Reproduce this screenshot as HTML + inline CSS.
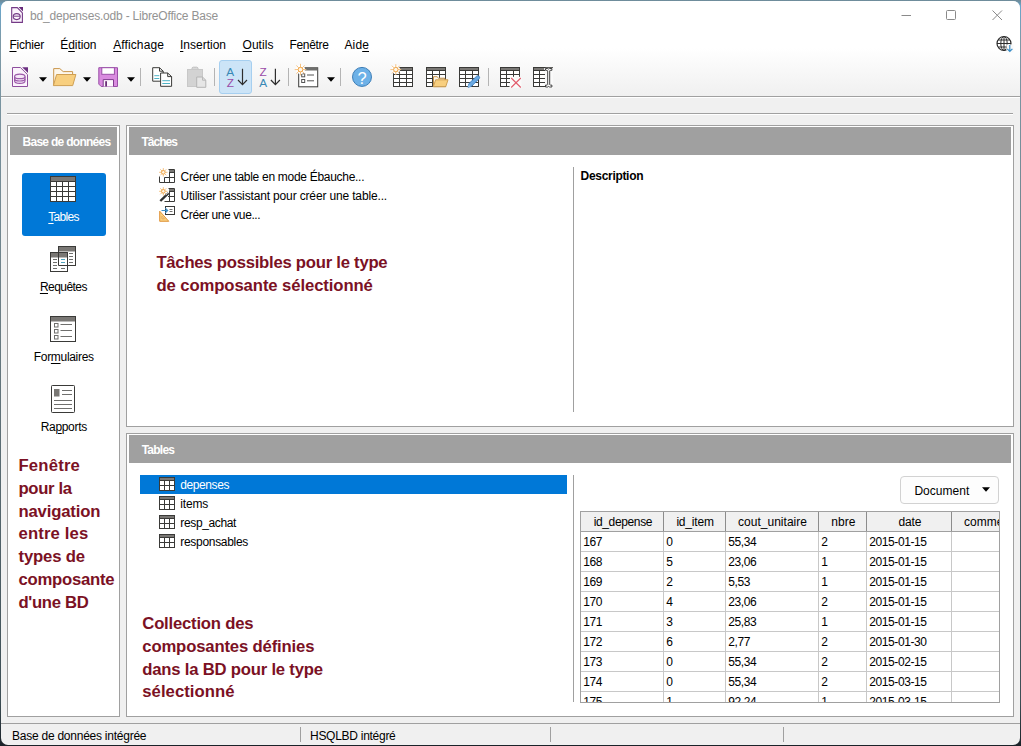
<!DOCTYPE html>
<html lang="fr">
<head>
<meta charset="utf-8">
<title>bd_depenses.odb - LibreOffice Base</title>
<style>
html,body{margin:0;padding:0;}
body{width:1021px;height:746px;overflow:hidden;position:relative;
  background:linear-gradient(180deg,#6f8a97 0px,#6aa6cc 6px,#7d9aa8 40px,#6d7f86 300px,#3d4e55 700px,#1a2228 746px);
  font-family:"Liberation Sans",sans-serif;font-size:12px;color:#000;}
#win{position:absolute;left:1px;top:1px;width:1018.600px;height:744px;border-radius:7px;background:#f0f0f0;overflow:hidden;}
#abs{position:absolute;left:-1px;top:-1px;width:1021px;height:746px;}
#abs div,#abs span,#abs svg{position:absolute;}
.t{white-space:nowrap;line-height:1;height:1em;}
.t u{text-decoration:underline;text-underline-offset:2px;text-decoration-thickness:1px;}
#topbg{left:0;top:0;width:1021px;height:96px;background:linear-gradient(180deg,#fff 0px,#fff 48px,#f0f0f0 96px);}
.az{font-size:11.800px;}
.hl{height:1px;background:#a0a0a0;}
.hw{height:1px;background:#fff;}
.panel{background:#fff;border:1px solid #a0a0a0;box-sizing:border-box;}
.phead{background:#a0a0a0;}
.sep{width:1px;background:#b4b4b4;}
.vsep{width:1px;background:#a0a0a0;}
.sel{background:#0078d7;}
.arr{width:8px;height:4.500px;background:#000;clip-path:polygon(0 0,100% 0,50% 100%);}
#grid{overflow:hidden;background:#fff;}
#grid .hbg{background:#f0f0f0;}
#grid .rl{height:1px;background:#c8c8c8;}
#grid .cl{width:1px;background:#c8c8c8;}
#grid .hcl{width:1px;background:#8c8c8c;}
#grid .hbl{height:1px;background:#a0a0a0;}
#grid .gb{border:1px solid #a0a0a0;box-sizing:border-box;}
</style>
</head>
<body>
<div id="win"><div id="abs">
<div id="topbg"></div>
<div class="hl" style="left:1px;top:96px;width:1019px"></div>
<div class="hw" style="left:1px;top:97px;width:1019px"></div>
<div class="hl" style="left:7px;top:113px;width:1006px"></div>
<div class="hw" style="left:7px;top:114px;width:1006px"></div>

<!-- left panel -->
<div class="panel" style="left:7px;top:125px;width:113px;height:592px"></div>
<div class="phead" style="left:10px;top:127px;width:107px;height:28px"></div>
<div class="sel" style="left:22px;top:173px;width:84px;height:63px;border-radius:3px"></div>

<!-- tasks panel -->
<div class="panel" style="left:126px;top:125px;width:888px;height:302px"></div>
<div class="phead" style="left:129px;top:127px;width:882px;height:28px"></div>
<div class="vsep" style="left:573px;top:167px;height:245px"></div>

<!-- tables panel -->
<div class="panel" style="left:126px;top:433px;width:888px;height:284px"></div>
<div class="phead" style="left:129px;top:435px;width:882px;height:28px"></div>
<div class="sel" style="left:140px;top:475px;width:427px;height:19px"></div>
<div class="vsep" style="left:573px;top:475px;height:227px"></div>

<!-- document button -->
<div style="left:900px;top:476px;width:99px;height:28px;border:1px solid #d2d2d2;border-radius:4px;background:#fdfdfd;box-sizing:border-box"></div>
<div class="arr" style="left:982px;top:487.200px"></div>

<div id="grid" style="left:580px;top:511px;width:420px;height:192px">
<div class="hbg" style="left:0;top:0;width:420px;height:20px"></div>
<div class="rl" style="left:0;top:40px;width:420px"></div>
<div class="rl" style="left:0;top:60px;width:420px"></div>
<div class="rl" style="left:0;top:80px;width:420px"></div>
<div class="rl" style="left:0;top:100px;width:420px"></div>
<div class="rl" style="left:0;top:120px;width:420px"></div>
<div class="rl" style="left:0;top:140px;width:420px"></div>
<div class="rl" style="left:0;top:160px;width:420px"></div>
<div class="rl" style="left:0;top:180px;width:420px"></div>
<div class="rl" style="left:0;top:200px;width:420px"></div>
<div class="cl" style="left:83px;top:21px;height:171px"></div>
<div class="hcl" style="left:83px;top:1px;height:19px"></div>
<div class="cl" style="left:145px;top:21px;height:171px"></div>
<div class="hcl" style="left:145px;top:1px;height:19px"></div>
<div class="cl" style="left:238px;top:21px;height:171px"></div>
<div class="hcl" style="left:238px;top:1px;height:19px"></div>
<div class="cl" style="left:286px;top:21px;height:171px"></div>
<div class="hcl" style="left:286px;top:1px;height:19px"></div>
<div class="cl" style="left:371px;top:21px;height:171px"></div>
<div class="hcl" style="left:371px;top:1px;height:19px"></div>
<div class="hbl" style="left:0;top:20px;width:420px"></div>
<span class="t" id="t39" style="left:13.7px;top:4.54px;letter-spacing:-0.366px;">id_depense</span>
<span class="t" id="t40" style="left:96.4px;top:4.54px;letter-spacing:-0.184px;">id_item</span>
<span class="t" id="t41" style="left:158.0px;top:4.54px;letter-spacing:0.022px;">cout_unitaire</span>
<span class="t" id="t42" style="left:251.3px;top:4.54px;letter-spacing:0.017px;">nbre</span>
<span class="t" id="t43" style="left:318.6px;top:4.54px;letter-spacing:-0.215px;">date</span>
<span class="t" id="t44" style="left:384.0px;top:4.54px;">comme</span>
<span class="t" id="t45" style="left:3.3px;top:24.64px;letter-spacing:-0.420px;">167</span>
<span class="t" id="t46" style="left:86.3px;top:24.64px;letter-spacing:-0.420px;">0</span>
<span class="t" id="t47" style="left:148.3px;top:24.64px;letter-spacing:-0.420px;">55,34</span>
<span class="t" id="t48" style="left:241.3px;top:24.64px;letter-spacing:-0.420px;">2</span>
<span class="t" id="t49" style="left:289.3px;top:24.64px;letter-spacing:-0.420px;">2015-01-15</span>
<span class="t" id="t50" style="left:3.3px;top:44.64px;letter-spacing:-0.420px;">168</span>
<span class="t" id="t51" style="left:86.3px;top:44.64px;letter-spacing:-0.420px;">5</span>
<span class="t" id="t52" style="left:148.3px;top:44.64px;letter-spacing:-0.420px;">23,06</span>
<span class="t" id="t53" style="left:241.3px;top:44.64px;letter-spacing:-0.420px;">1</span>
<span class="t" id="t54" style="left:289.3px;top:44.64px;letter-spacing:-0.420px;">2015-01-15</span>
<span class="t" id="t55" style="left:3.3px;top:64.64px;letter-spacing:-0.420px;">169</span>
<span class="t" id="t56" style="left:86.3px;top:64.64px;letter-spacing:-0.420px;">2</span>
<span class="t" id="t57" style="left:148.3px;top:64.64px;letter-spacing:-0.420px;">5,53</span>
<span class="t" id="t58" style="left:241.3px;top:64.64px;letter-spacing:-0.420px;">1</span>
<span class="t" id="t59" style="left:289.3px;top:64.64px;letter-spacing:-0.420px;">2015-01-15</span>
<span class="t" id="t60" style="left:3.3px;top:84.64px;letter-spacing:-0.420px;">170</span>
<span class="t" id="t61" style="left:86.3px;top:84.64px;letter-spacing:-0.420px;">4</span>
<span class="t" id="t62" style="left:148.3px;top:84.64px;letter-spacing:-0.420px;">23,06</span>
<span class="t" id="t63" style="left:241.3px;top:84.64px;letter-spacing:-0.420px;">2</span>
<span class="t" id="t64" style="left:289.3px;top:84.64px;letter-spacing:-0.420px;">2015-01-15</span>
<span class="t" id="t65" style="left:3.3px;top:104.64px;letter-spacing:-0.420px;">171</span>
<span class="t" id="t66" style="left:86.3px;top:104.64px;letter-spacing:-0.420px;">3</span>
<span class="t" id="t67" style="left:148.3px;top:104.64px;letter-spacing:-0.420px;">25,83</span>
<span class="t" id="t68" style="left:241.3px;top:104.64px;letter-spacing:-0.420px;">1</span>
<span class="t" id="t69" style="left:289.3px;top:104.64px;letter-spacing:-0.420px;">2015-01-15</span>
<span class="t" id="t70" style="left:3.3px;top:124.64px;letter-spacing:-0.420px;">172</span>
<span class="t" id="t71" style="left:86.3px;top:124.64px;letter-spacing:-0.420px;">6</span>
<span class="t" id="t72" style="left:148.3px;top:124.64px;letter-spacing:-0.420px;">2,77</span>
<span class="t" id="t73" style="left:241.3px;top:124.64px;letter-spacing:-0.420px;">2</span>
<span class="t" id="t74" style="left:289.3px;top:124.64px;letter-spacing:-0.420px;">2015-01-30</span>
<span class="t" id="t75" style="left:3.3px;top:144.64px;letter-spacing:-0.420px;">173</span>
<span class="t" id="t76" style="left:86.3px;top:144.64px;letter-spacing:-0.420px;">0</span>
<span class="t" id="t77" style="left:148.3px;top:144.64px;letter-spacing:-0.420px;">55,34</span>
<span class="t" id="t78" style="left:241.3px;top:144.64px;letter-spacing:-0.420px;">2</span>
<span class="t" id="t79" style="left:289.3px;top:144.64px;letter-spacing:-0.420px;">2015-02-15</span>
<span class="t" id="t80" style="left:3.3px;top:164.64px;letter-spacing:-0.420px;">174</span>
<span class="t" id="t81" style="left:86.3px;top:164.64px;letter-spacing:-0.420px;">0</span>
<span class="t" id="t82" style="left:148.3px;top:164.64px;letter-spacing:-0.420px;">55,34</span>
<span class="t" id="t83" style="left:241.3px;top:164.64px;letter-spacing:-0.420px;">2</span>
<span class="t" id="t84" style="left:289.3px;top:164.64px;letter-spacing:-0.420px;">2015-03-15</span>
<span class="t" id="t85" style="left:3.3px;top:184.64px;letter-spacing:-0.420px;">175</span>
<span class="t" id="t86" style="left:86.3px;top:184.64px;letter-spacing:-0.420px;">1</span>
<span class="t" id="t87" style="left:148.3px;top:184.64px;letter-spacing:-0.420px;">92,24</span>
<span class="t" id="t88" style="left:241.3px;top:184.64px;letter-spacing:-0.420px;">1</span>
<span class="t" id="t89" style="left:289.3px;top:184.64px;letter-spacing:-0.420px;">2015-03-15</span>
<div class="gb" style="left:0;top:0;width:420px;height:192px"></div>
</div>

<!-- status bar -->
<div class="hl" style="left:1px;top:723px;width:1019px"></div>
<div class="vsep" style="left:300px;top:727px;height:15px"></div>
<div class="vsep" style="left:550px;top:727px;height:15px"></div>
<div class="vsep" style="left:783px;top:727px;height:15px"></div>

<!-- ===== title bar ===== -->
<svg style="left:11px;top:7px" width="12" height="16" viewBox="0 0 12 16">
  <path d="M0.700 0.600H6.300L11.400 5.900V15.400H0.700Z" fill="#fbf3fc" stroke="#743a86" stroke-width="1.100"/>
  <path d="M7.600 0.100H12V4.500Z" fill="#67297a"/>
  <ellipse cx="5.700" cy="9.600" rx="3.500" ry="3" fill="#fdf7fe" stroke="#743a86" stroke-width="1.100"/>
  <path d="M2.400 9.200H9" stroke="#743a86" stroke-width="1" fill="none"/>
</svg>
<svg style="left:896px;top:5px" width="112" height="20" viewBox="0 0 112 20" fill="none" stroke="#8a8a8a" stroke-width="1">
  <path d="M5.5 10.5H15"/>
  <rect x="50.5" y="5.5" width="9" height="9" rx="1"/>
  <path d="M96.5 5.5L106 15M106 5.5L96.5 15"/>
</svg>
<!-- globe -->
<svg style="left:996px;top:35px" width="18" height="18" viewBox="0 0 18 18" fill="none">
  <circle cx="8" cy="8.5" r="7" stroke="#2e2e2e" stroke-width="1.2"/>
  <ellipse cx="8" cy="8.5" rx="3.2" ry="7" stroke="#2e2e2e" stroke-width="1"/>
  <path d="M8 1.5V15.5M1 8.5H15M2.2 5H13.8M2.2 12H13.8" stroke="#2e2e2e" stroke-width="1"/>
  <rect x="10.5" y="9.5" width="7" height="8" fill="#fafafa" stroke="none"/>
  <path d="M13.8 10V16.2M11.2 13.8L13.8 16.4L16.4 13.8" stroke="#3a8ec8" stroke-width="1.2"/>
</svg>

<!-- ===== toolbar ===== -->
<!-- new database -->
<svg style="left:8px;top:65px" width="24" height="24" viewBox="0 0 24 24">
  <path d="M4.5 2.5H12.4L19.5 9.6V21.5H4.5Z" fill="#fbf3fc" stroke="#8e4e9e" stroke-width="1"/>
  <path d="M14.2 2.2H20V8Z" fill="#6c2f82"/>
  <g fill="#f6e9f8" stroke="#9c5aaa" stroke-width="1.200">
    <path d="M6.6 11.5V16c0 1.5 2.4 2.4 5.2 2.4s5.2-0.900 5.200-2.400V11.500"/>
    <path d="M6.600 13.700c0 1.400 2.400 2.300 5.200 2.300s5.200-0.900 5.200-2.300" fill="none"/>
    <ellipse cx="11.800" cy="11.400" rx="5.200" ry="2.300"/>
  </g>
</svg>
<div class="arr" style="left:39px;top:77.200px"></div>
<!-- open folder -->
<svg style="left:52px;top:65px" width="26" height="24" viewBox="0 0 26 24">
  <path d="M1.700 20.400V3.600H7.800L11.200 6.600H20.600V9.500" fill="#fdf7ec" stroke="#c9964c" stroke-width="1"/>
  <path d="M4.600 9.500H23.900L20.700 20.600H1.400Z" fill="#f8cf7f" stroke="#cf9f52" stroke-width="1" stroke-linejoin="round"/>
</svg>
<div class="arr" style="left:83px;top:77.200px"></div>
<!-- save -->
<svg style="left:96px;top:65px" width="24" height="24" viewBox="0 0 24 24">
  <path d="M2.800 2.700H21.500V21.500H5.200L2.800 19.100Z" fill="#d98bdf" stroke="#9a4fa8" stroke-width="1" stroke-linejoin="round"/>
  <rect x="5.800" y="2.700" width="12.600" height="6.600" fill="#fff" stroke="#9a4fa8" stroke-width="1"/>
  <path d="M7.200 21.500V14.600H17.500V21.500" fill="#fdf6fd" stroke="#7f3a8e" stroke-width="1"/>
  <rect x="9.200" y="16.200" width="1.800" height="5.300" fill="#6a2d78"/>
</svg>
<div class="arr" style="left:127px;top:77.200px"></div>
<div class="sep" style="left:140px;top:68px;height:18px"></div>
<!-- copy -->
<svg style="left:150px;top:65px" width="24" height="24" viewBox="0 0 24 24" fill="#fff" stroke="#3a3a38" stroke-width="1" stroke-linejoin="round">
  <path d="M2.700 2.700H9.500L13.200 6.200V16.200H2.700Z"/>
  <path d="M9.500 2.700V6.200H13.200" fill="none"/>
  <path d="M4.300 10.700H9.300M4.300 13.500H9.300" stroke="#4fb3c6"/>
  <path d="M10.600 8H17.700L21.600 11.600V21.300H10.600Z"/>
  <path d="M17.700 8V11.600H21.600" fill="none"/>
  <path d="M12.300 15.700H20M12.300 18.500H20" stroke="#4fb3c6"/>
</svg>
<!-- paste (disabled) -->
<svg style="left:185px;top:65px" width="24" height="24" viewBox="0 0 24 24">
  <path d="M7 4.400V3.400C7 2.700 7.600 2.200 8.300 2.200H11.700C12.400 2.200 13 2.700 13 3.400V4.400Z" fill="#dcdcdc" stroke="#bdbdbd" stroke-width="1"/>
  <rect x="2.500" y="4.500" width="15" height="17" fill="#d3d3d3" stroke="#c8c8c8" stroke-width="1"/>
  <path d="M11.700 12H17.500L20.800 15.200V22.300H11.700Z" fill="#e6e6e6" stroke="#b4b4b4" stroke-width="1"/>
  <path d="M17.500 12V15.200H20.800" fill="none" stroke="#b9b9b9" stroke-width="1"/>
</svg>
<div class="sep" style="left:214px;top:68px;height:18px"></div>
<!-- sort asc (active) -->
<div style="left:219px;top:60px;width:33px;height:34px;background:#cce4f7;border:1px solid #a6cff0;border-radius:3px;box-sizing:border-box"></div>
<span class="t az" style="left:226.2px;top:67.000px;color:#3889b5">A</span>
<span class="t az" style="left:226.800px;top:78.000px;color:#9a4ba8">Z</span>
<svg style="left:236px;top:66px" width="14" height="22" viewBox="0 0 14 22" fill="none" stroke="#2e2e2e" stroke-width="1.200">
  <path d="M6.500 2.700V18.400M2 14L6.500 18.600L11 14"/>
</svg>
<!-- sort desc -->
<span class="t az" style="left:259.600px;top:67.000px;color:#9a4ba8">Z</span>
<span class="t az" style="left:259.300px;top:78.000px;color:#3889b5">A</span>
<svg style="left:269px;top:66px" width="14" height="22" viewBox="0 0 14 22" fill="none" stroke="#2e2e2e" stroke-width="1.200">
  <path d="M6.400 2.700V18.400M1.900 14L6.400 18.600L10.900 14"/>
</svg>
<div class="sep" style="left:288px;top:68px;height:18px"></div>
<!-- new form -->
<svg style="left:294px;top:63px" width="26" height="26" viewBox="0 0 26 26">
  <rect x="4.700" y="4.800" width="19" height="19" fill="#fff" stroke="#3a3a38" stroke-width="1"/>
  <rect x="5" y="5" width="18.500" height="2.500" fill="#6f6f6d"/>
  <g fill="none" stroke="#555" stroke-width="1">
    <rect x="7.700" y="10.800" width="3" height="3"/>
    <rect x="7.700" y="16.500" width="3" height="3"/>
    <path d="M13 12H20M13 17.800H20"/>
  </g>
  <g stroke="#f0a64a" stroke-width="1" fill="none">
    <circle cx="6.500" cy="6.600" r="4.600" fill="#fff" stroke="none"/>
    <path d="M6.500 0.800V12.400M0.700 6.600H12.300M2.400 2.500L10.600 10.700M10.600 2.500L2.400 10.700" stroke="#f5c283"/>
    <circle cx="6.500" cy="6.600" r="2.300" fill="#fff7e8" stroke="#f0a64a"/>
  </g>
</svg>
<div class="arr" style="left:327px;top:77.200px"></div>
<div class="sep" style="left:340px;top:68px;height:18px"></div>
<!-- help -->
<svg style="left:351px;top:66px" width="22" height="22" viewBox="0 0 22 22">
  <circle cx="11" cy="10.900" r="9.500" fill="#6db1e7" stroke="#3c7db6" stroke-width="1"/>
  <text x="11" y="17.600" text-anchor="middle" font-family="Liberation Sans, sans-serif" font-size="16.500" font-weight="400" fill="#fff">?</text>
</svg>

<svg style="left:389px;top:63px" width="26" height="26" viewBox="0 0 26 26"><g transform="translate(2,2)"><rect x="2.500" y="2.500" width="19" height="19" fill="#fff" stroke="#3a3a38"/><rect x="3" y="3" width="18" height="2.500" fill="#797774" stroke="none"/><path d="M3 5.500H21M3 9.500H21M3 13.500H21M3 17.500H21M8.500 6V21M15.500 6V21" stroke="#3a3a38" fill="none"/></g><g fill="none" stroke-width="1"><circle cx="6.8" cy="6.6" r="4.3" fill="#fff" stroke="none"/><path d="M6.8 1.2V12M1.4 6.6H12.2M2.91 2.71L10.69 10.49M10.69 2.71L2.91 10.49" stroke="#f5c283"/><circle cx="6.8" cy="6.6" r="2.2" fill="#fff7e8" stroke="#f0a64a"/></g></svg>
<svg style="left:424px;top:65px" width="26" height="24" viewBox="0 0 26 24"><rect x="2.500" y="2.500" width="19" height="19" fill="#fff" stroke="#3a3a38"/><rect x="3" y="3" width="18" height="2.500" fill="#797774" stroke="none"/><path d="M3 5.500H21M3 9.500H21M3 13.500H21M3 17.500H21M8.500 6V21M15.500 6V21" stroke="#3a3a38" fill="none"/><path d="M9.500 21.800V11.700H13L14.600 13.200H20.700V15" fill="#fdf7ec" stroke="#c9964c"/><path d="M11.600 14.800H24L21.700 21.800H9.300Z" fill="#f8cf7f" stroke="#cf9f52" stroke-linejoin="round"/></svg>
<svg style="left:457px;top:65px" width="26" height="24" viewBox="0 0 26 24"><rect x="2.500" y="2.500" width="19" height="19" fill="#fff" stroke="#3a3a38"/><rect x="3" y="3" width="18" height="2.500" fill="#797774" stroke="none"/><path d="M3 5.500H21M3 9.500H21M3 13.500H21M3 17.500H21M8.500 6V21M15.500 6V21" stroke="#3a3a38" fill="none"/><path d="M11 22.300L11.900 18.600L19.600 11.200C20.300 10.500 21.300 10.500 22 11.200C22.800 12 22.800 13 22.100 13.700L14.500 21.300Z" fill="#6aa9e2" stroke="#3f7fbf" stroke-width="0.900" stroke-linejoin="round"/><path d="M11 22.300L11.800 19.300L13.900 21.400Z" fill="#8ec0ea" stroke="none"/></svg>
<div class="sep" style="left:488px;top:68px;height:18px"></div>
<svg style="left:498px;top:65px" width="26" height="24" viewBox="0 0 26 24"><rect x="2.500" y="2.500" width="19" height="19" fill="#fff" stroke="#3a3a38"/><rect x="3" y="3" width="18" height="2.500" fill="#797774" stroke="none"/><path d="M3 5.500H21M3 9.500H21M3 13.500H21M3 17.500H21M8.500 6V21M15.500 6V21" stroke="#3a3a38" fill="none"/><rect x="11.500" y="11.800" width="12" height="11" fill="#fafafa" stroke="none"/><path d="M3 13.500H12M3 17.500H12M8.500 12V21" stroke="#3a3a38" fill="none"/><path d="M13.200 13L22.800 22.500M22.800 13L13.200 22.500" stroke="#e25c6c" stroke-width="1.100" fill="none"/></svg>
<svg style="left:531px;top:65px" width="26" height="24" viewBox="0 0 26 24"><rect x="2.500" y="2.500" width="19" height="19" fill="#fff" stroke="#3a3a38"/><rect x="3" y="3" width="18" height="2.500" fill="#797774" stroke="none"/><path d="M3 5.500H21M3 9.500H21M3 13.500H21M3 17.500H21M8.500 6V21M15.500 6V21" stroke="#3a3a38" fill="none"/><rect x="13.200" y="2.800" width="9" height="20" fill="#fafafa" stroke="none"/><path d="M3 5.500H14M3 9.500H14M3 13.500H14M3 17.500H14M3 21.500H14M3 2.500H14.500" stroke="#3a3a38" fill="none"/><path d="M14.500 3.500H16.800L17.700 4.100L18.600 3.500H20.900V5.300H19.200L18.700 5.800V19.600L19.200 20.100H20.900V22H18.600L17.700 21.400L16.800 22H14.500V20.100H16.200L16.700 19.600V5.800L16.200 5.300H14.500Z" fill="#fff" stroke="#2e2e2e" stroke-width="0.900" stroke-linejoin="round"/></svg>
<svg style="left:50px;top:176px" width="26" height="26" viewBox="0 0 26 26"><rect x="0.500" y="0.500" width="25" height="25" fill="#fff" stroke="#3a3a38"/><rect x="1" y="1" width="24" height="4" fill="#797774"/><path d="M1 5.500H25M1 10.500H25M1 15.500H25M1 20.500H25M6.500 6V25M12.500 6V25M18.500 6V25" stroke="#3a3a38" fill="none"/></svg>
<svg style="left:50px;top:246px" width="26" height="26" viewBox="0 0 26 26"><rect x="8.500" y="0.500" width="17" height="19" fill="#fff" stroke="#3a3a38"/><rect x="9" y="1" width="16" height="4.500" fill="#797774"/><path d="M19 7.500H23M19 10.500H23M19 13.500H23M19 16.500H23" stroke="#6f6f6d" fill="none"/><rect x="0.500" y="6.500" width="17" height="19" fill="#fff" stroke="#3a3a38"/><rect x="1" y="7" width="16" height="4.500" fill="#797774"/><path d="M3 13.500H7M3 16.500H7M3 19.500H7M3 22.500H7M11 22.500H15" stroke="#6f6f6d" fill="none"/><path d="M8.500 6.500V19.500H17.500" stroke="#3a3a38" fill="none"/><path d="M8.500 0.500V7M17.500 6.500V12" stroke="#3a3a38" fill="none"/><path d="M11 13.500H15M11 16.500H15" stroke="#4fa3bd" fill="none"/></svg>
<svg style="left:50px;top:316px" width="26" height="26" viewBox="0 0 26 26"><rect x="0.500" y="0.500" width="25" height="25" fill="#fff" stroke="#3a3a38"/><rect x="1" y="1" width="24" height="4.500" fill="#797774"/><g fill="none" stroke="#6f6f6d"><rect x="4.500" y="7.500" width="3.500" height="3.500"/><rect x="4.500" y="13.500" width="3.500" height="3.500"/><rect x="4.500" y="19.500" width="3.500" height="3.500"/><path d="M10.500 8.500H22M10.500 14.500H22M10.500 20.500H22"/></g></svg>
<svg style="left:51px;top:385px" width="24" height="28" viewBox="0 0 24 28"><rect x="0.500" y="0.500" width="23" height="27" rx="0.800" fill="#fff" stroke="#3a3a38"/><rect x="3" y="4" width="5.500" height="7.500" fill="#797774"/><path d="M11 5.500H21M11 9.500H21M3 15.500H21M3 19.500H21M3 23.500H21" stroke="#6f6f6d" fill="none"/></svg>
<svg style="left:159px;top:477px" width="16" height="14" viewBox="0 0 16 14"><rect x="0.500" y="0.500" width="15" height="13" fill="#fff" stroke="#3a3a38"/><rect x="1" y="1" width="14" height="2" fill="#797774"/><path d="M1 3.500H15M1 8.500H15M5.500 4V13M10.500 4V13" stroke="#3a3a38" fill="none"/></svg>
<svg style="left:159px;top:496px" width="16" height="14" viewBox="0 0 16 14"><rect x="0.500" y="0.500" width="15" height="13" fill="#fff" stroke="#3a3a38"/><rect x="1" y="1" width="14" height="2" fill="#797774"/><path d="M1 3.500H15M1 8.500H15M5.500 4V13M10.500 4V13" stroke="#3a3a38" fill="none"/></svg>
<svg style="left:159px;top:515px" width="16" height="14" viewBox="0 0 16 14"><rect x="0.500" y="0.500" width="15" height="13" fill="#fff" stroke="#3a3a38"/><rect x="1" y="1" width="14" height="2" fill="#797774"/><path d="M1 3.500H15M1 8.500H15M5.500 4V13M10.500 4V13" stroke="#3a3a38" fill="none"/></svg>
<svg style="left:159px;top:534px" width="16" height="14" viewBox="0 0 16 14"><rect x="0.500" y="0.500" width="15" height="13" fill="#fff" stroke="#3a3a38"/><rect x="1" y="1" width="14" height="2" fill="#797774"/><path d="M1 3.500H15M1 8.500H15M5.500 4V13M10.500 4V13" stroke="#3a3a38" fill="none"/></svg>
<svg style="left:159px;top:168px" width="16" height="16" viewBox="0 0 16 16"><path d="M9.500 1.500H15.500V14.500H0.500V8.500" fill="#fff" stroke="#3a3a38"/><rect x="10" y="2" width="5" height="2" fill="#797774"/><path d="M10 4.500H15M5.500 9.500H15.500M5.500 9.500V14.500M10.500 4.500V14.500" stroke="#3a3a38" fill="none"/><g fill="none" stroke-width="1"><circle cx="4.3" cy="4.3" r="3.6" fill="#fff" stroke="none"/><path d="M4.3 0.1V8.5M0.1 4.3H8.5M1.28 1.28L7.32 7.32M7.32 1.28L1.28 7.32" stroke="#f5c283"/><circle cx="4.3" cy="4.3" r="1.8" fill="#fff7e8" stroke="#f0a64a"/></g></svg>
<svg style="left:159px;top:187px" width="16" height="16" viewBox="0 0 16 16"><path d="M9.500 1.500H15.500V14.500H5.500" fill="#fff" stroke="#3a3a38"/><rect x="10" y="2" width="5" height="2" fill="#797774"/><path d="M10 4.500H15M9 9.500H15.500M10.500 4.500V14.500" stroke="#3a3a38" fill="none"/><g fill="none" stroke-width="1"><circle cx="4.3" cy="4.3" r="3.6" fill="#fff" stroke="none"/><path d="M4.3 0.1V8.5M0.1 4.3H8.5M1.28 1.28L7.32 7.32M7.32 1.28L1.28 7.32" stroke="#f5c283"/><circle cx="4.3" cy="4.3" r="1.8" fill="#fff7e8" stroke="#f0a64a"/></g><path d="M1.300 14L9.500 6.200" stroke="#2e2e2e" stroke-width="2.400" fill="none"/><path d="M6.800 7.800L8.800 5.900" stroke="#fff" stroke-width="1" fill="none"/></svg>
<svg style="left:159px;top:206px" width="16" height="16" viewBox="0 0 16 16"><rect x="6.500" y="0.500" width="9" height="8" fill="#fff" stroke="#3a3a38"/><path d="M10.500 3.500H13.500M10.500 5.500H13.500" stroke="#6f6f6d" fill="none"/><path d="M0.700 15.300V5.200L9.800 15.300Z" fill="#f8cf7f" stroke="#e0963c" stroke-linejoin="round"/><path d="M3 12.800V10.300L5.300 12.800Z" fill="#fdf2dc" stroke="#e0963c" stroke-width="0.700"/><path d="M2.500 4.500H8.500M6.300 2.200L8.700 4.500L6.300 6.800" stroke="#3a8ec8" fill="none" stroke-width="1.100"/></svg>
<span class="t" id="t0" style="left:30.0px;top:10.34px;color:#939393;letter-spacing:-0.193px;">bd_depenses.odb - LibreOffice Base</span>
<span class="t" id="t1" style="left:9.4px;top:38.84px;letter-spacing:-0.204px;"><u>F</u>ichier</span>
<span class="t" id="t2" style="left:60.3px;top:38.84px;letter-spacing:-0.088px;">É<u>d</u>ition</span>
<span class="t" id="t3" style="left:113.2px;top:38.84px;letter-spacing:0.108px;"><u>A</u>ffichage</span>
<span class="t" id="t4" style="left:180.0px;top:38.84px;letter-spacing:-0.005px;"><u>I</u>nsertion</span>
<span class="t" id="t5" style="left:242.5px;top:38.84px;letter-spacing:0.052px;"><u>O</u>utils</span>
<span class="t" id="t6" style="left:289.5px;top:38.84px;letter-spacing:-0.342px;">Fe<u>n</u>être</span>
<span class="t" id="t7" style="left:344.5px;top:38.84px;letter-spacing:0.117px;">Aid<u>e</u></span>
<span class="t" id="t8" style="left:22.5px;top:135.84px;font-weight:700;color:#fff;letter-spacing:-0.714px;">Base de données</span>
<span class="t" id="t9" style="left:141.5px;top:135.84px;font-weight:700;color:#fff;letter-spacing:-0.977px;">Tâches</span>
<span class="t" id="t10" style="left:141.7px;top:443.84px;font-weight:700;color:#fff;letter-spacing:-0.771px;">Tables</span>
<span class="t" id="t11" style="left:48.3px;top:210.84px;color:#fff;letter-spacing:-0.698px;"><u>T</u>ables</span>
<span class="t" id="t12" style="left:39.9px;top:280.84px;letter-spacing:-0.547px;"><u>R</u>equêtes</span>
<span class="t" id="t13" style="left:33.8px;top:350.84px;letter-spacing:-0.314px;">For<u>m</u>ulaires</span>
<span class="t" id="t14" style="left:40.7px;top:420.84px;letter-spacing:-0.315px;">Ra<u>p</u>ports</span>
<span class="t" id="t15" style="left:180.6px;top:170.84px;letter-spacing:-0.290px;">Créer une table en mode Ébauche...</span>
<span class="t" id="t16" style="left:180.6px;top:189.84px;letter-spacing:-0.151px;">Utiliser l'assistant pour créer une table...</span>
<span class="t" id="t17" style="left:180.6px;top:208.84px;letter-spacing:-0.403px;">Créer une vue...</span>
<span class="t" id="t18" style="left:580.6px;top:169.84px;font-weight:700;letter-spacing:-0.311px;">Description</span>
<span class="t" id="t19" style="left:180.3px;top:478.84px;color:#fff;letter-spacing:-0.418px;">depenses</span>
<span class="t" id="t20" style="left:180.3px;top:497.84px;letter-spacing:-0.194px;">items</span>
<span class="t" id="t21" style="left:180.3px;top:516.84px;letter-spacing:-0.358px;">resp_achat</span>
<span class="t" id="t22" style="left:180.3px;top:535.84px;letter-spacing:-0.308px;">responsables</span>
<span class="t" id="t23" style="left:914.4px;top:484.84px;letter-spacing:0.037px;">Document</span>
<span class="t" id="t24" style="left:12.0px;top:729.84px;letter-spacing:-0.242px;">Base de données intégrée</span>
<span class="t" id="t25" style="left:310.0px;top:729.84px;letter-spacing:-0.277px;">HSQLBD intégré</span>
<span class="t red" id="t26" style="left:156.4px;top:254.96px;font-size:16.7px;font-weight:700;color:#7b1124;letter-spacing:-0.253px;">Tâches possibles pour le type</span>
<span class="t red" id="t27" style="left:156.4px;top:277.76px;font-size:16.7px;font-weight:700;color:#7b1124;letter-spacing:-0.098px;">de composante sélectionné</span>
<span class="t red" id="t28" style="left:18.5px;top:457.96px;font-size:16.7px;font-weight:700;color:#7b1124;letter-spacing:0.174px;">Fenêtre</span>
<span class="t red" id="t29" style="left:18.5px;top:480.76px;font-size:16.7px;font-weight:700;color:#7b1124;letter-spacing:-0.334px;">pour la</span>
<span class="t red" id="t30" style="left:18.5px;top:503.56px;font-size:16.7px;font-weight:700;color:#7b1124;letter-spacing:-0.175px;">navigation</span>
<span class="t red" id="t31" style="left:18.5px;top:526.36px;font-size:16.7px;font-weight:700;color:#7b1124;letter-spacing:0.140px;">entre les</span>
<span class="t red" id="t32" style="left:18.5px;top:549.16px;font-size:16.7px;font-weight:700;color:#7b1124;letter-spacing:-0.152px;">types de</span>
<span class="t red" id="t33" style="left:18.5px;top:571.96px;font-size:16.7px;font-weight:700;color:#7b1124;letter-spacing:-0.250px;">composante</span>
<span class="t red" id="t34" style="left:18.5px;top:594.76px;font-size:16.7px;font-weight:700;color:#7b1124;letter-spacing:-0.335px;">d'une BD</span>
<span class="t red" id="t35" style="left:142.3px;top:615.76px;font-size:16.7px;font-weight:700;color:#7b1124;letter-spacing:-0.219px;">Collection des</span>
<span class="t red" id="t36" style="left:142.3px;top:638.66px;font-size:16.7px;font-weight:700;color:#7b1124;letter-spacing:-0.164px;">composantes définies</span>
<span class="t red" id="t37" style="left:142.3px;top:661.56px;font-size:16.7px;font-weight:700;color:#7b1124;letter-spacing:-0.215px;">dans la BD pour le type</span>
<span class="t red" id="t38" style="left:142.3px;top:684.46px;font-size:16.7px;font-weight:700;color:#7b1124;letter-spacing:0.034px;">sélectionné</span>
</div></div>
</body>
</html>
